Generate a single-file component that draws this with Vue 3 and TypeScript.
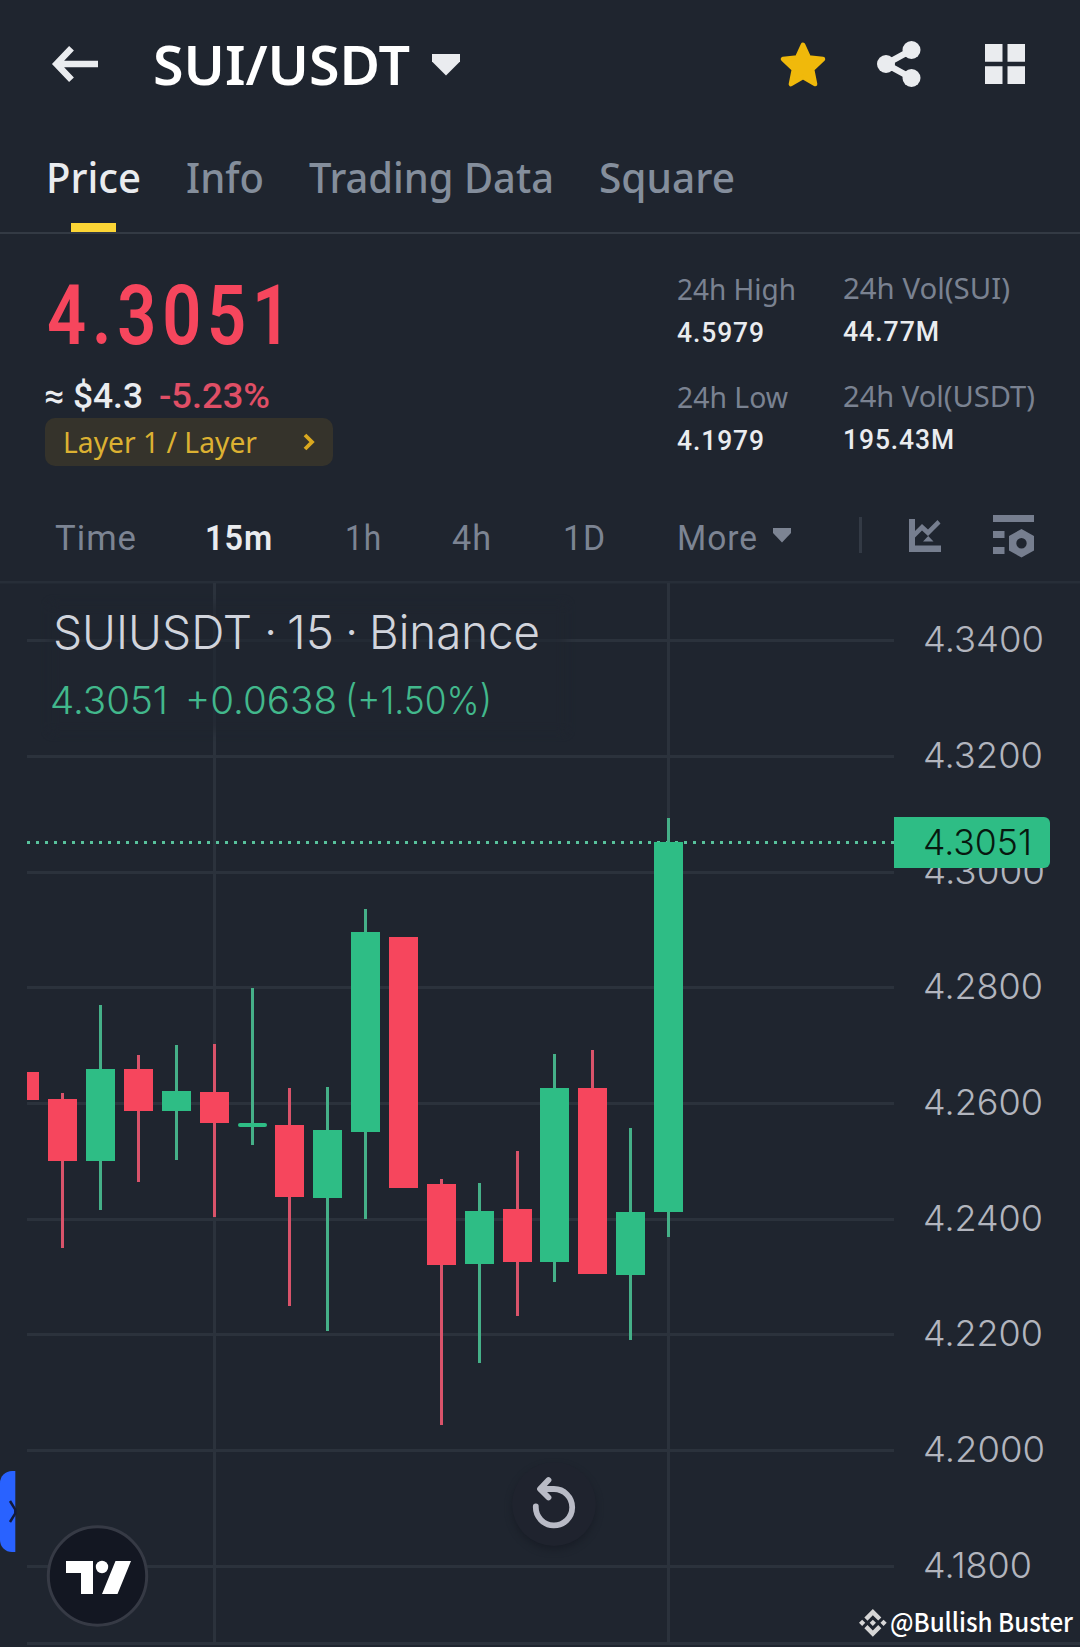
<script setup lang="ts">
interface Candle { x: number; w?: number; top: number; bottom: number; high: number; low: number; up: boolean }

const tabs = [
  { label: 'Price', w: 93, active: true },
  { label: 'Info', w: 76 },
  { label: 'Trading Data', w: 243 },
  { label: 'Square', w: 134 },
]
const stats = [
  { label: '24h High', value: '4.5979', lw: 119, vw: 88, dy: 1 },
  { label: '24h Vol(SUI)', value: '44.77M', lw: 167, vw: 97, dy: 0 },
  { label: '24h Low', value: '4.1979', lw: 111, vw: 88, dy: 1 },
  { label: '24h Vol(USDT)', value: '195.43M', lw: 192, vw: 112, dy: 0 },
]
const intervals = [
  { label: 'Time', w: 80, gap: 70 },
  { label: '15m', w: 66, gap: 74, active: true },
  { label: '1h', w: 35, gap: 72 },
  { label: '4h', w: 38, gap: 73 },
  { label: '1D', w: 41, gap: 73 },
  { label: 'More', w: 79, gap: 16 },
]
const levels = [
  { y: 640.5, label: '4.3400', w: 119 },
  { y: 756.5, label: '4.3200', w: 118 },
  { y: 872.5, label: '4.3000', w: 120 },
  { y: 987.5, label: '4.2800', w: 118 },
  { y: 1103.5, label: '4.2600', w: 118 },
  { y: 1219.5, label: '4.2400', w: 118 },
  { y: 1334.5, label: '4.2200', w: 118 },
  { y: 1450.5, label: '4.2000', w: 120 },
  { y: 1566.5, label: '4.1800', w: 107 },
]
const candles: Candle[] = [
  { x: 27, w: 12, top: 1072, bottom: 1100, high: 1072, low: 1100, up: false },
  { x: 48, top: 1099, bottom: 1161, high: 1093, low: 1248, up: false },
  { x: 86, top: 1069, bottom: 1161, high: 1005, low: 1210, up: true },
  { x: 124, top: 1069, bottom: 1111, high: 1055, low: 1182, up: false },
  { x: 162, top: 1091, bottom: 1111, high: 1045, low: 1160, up: true },
  { x: 200, top: 1092, bottom: 1123, high: 1044, low: 1217, up: false },
  { x: 238, top: 1123, bottom: 1127, high: 988, low: 1145, up: true },
  { x: 275, top: 1125, bottom: 1197, high: 1088, low: 1306, up: false },
  { x: 313, top: 1130, bottom: 1198, high: 1087, low: 1331, up: true },
  { x: 351, top: 932, bottom: 1132, high: 909, low: 1219, up: true },
  { x: 389, top: 937, bottom: 1188, high: 937, low: 1188, up: false },
  { x: 427, top: 1184, bottom: 1265, high: 1179, low: 1425, up: false },
  { x: 465, top: 1211, bottom: 1264, high: 1183, low: 1363, up: true },
  { x: 503, top: 1209, bottom: 1262, high: 1151, low: 1316, up: false },
  { x: 540, top: 1088, bottom: 1262, high: 1054, low: 1282, up: true },
  { x: 578, top: 1088, bottom: 1274, high: 1050, low: 1274, up: false },
  { x: 616, top: 1212, bottom: 1275, high: 1128, low: 1340, up: true },
  { x: 654, top: 842, bottom: 1212, high: 818, low: 1237, up: true },
]
</script>

<template>
  <main class="screen">
    <header class="header">
      <svg class="back" width="46" height="38" viewBox="0 0 46 38">
        <path d="M19.5 3.2 4.5 19l15 15.8M5 19h41" fill="none" stroke="#eaecef" stroke-width="6.6" />
      </svg>
      <svg class="pair" width="256" height="60">
        <text x="-2" y="44.5" textLength="257" lengthAdjust="spacingAndGlyphs">SUI/USDT</text>
      </svg>
      <svg class="caret" width="28" height="22" viewBox="0 0 28 22"><path d="M0 0h28v7.5L14 21.5 0 7.5z" fill="#eaecef" /></svg>
      <svg class="star" width="46" height="48" viewBox="0 0 46 48">
        <path d="M23 4l5.8 12.7 14.2 1.5-10.9 10.3 3 14.8L23 36.300l-12.100 7 3-14.800L3 18.200l14.200-1.500z" transform="translate(0 .8)" fill="#f0b90b" stroke="#f0b90b" stroke-width="4.5" stroke-linejoin="round" />
      </svg>
      <svg class="share" width="44" height="46" viewBox="0 0 44 46">
        <path d="M34.5 9 9 23l25.500 14" fill="none" stroke="#eaecef" stroke-width="6.5" />
        <circle cx="9" cy="23" r="9" fill="#eaecef" /><circle cx="34.500" cy="9" r="9" fill="#eaecef" /><circle cx="34.500" cy="37" r="9" fill="#eaecef" />
      </svg>
      <svg class="grid" width="40" height="40" viewBox="0 0 40 40">
        <path d="M0 0h17.500v17.700H0zM22.500 0H40v17.700H22.500zM0 22.300h17.500V40H0zM22.500 22.300H40V40H22.500z" fill="#eaecef" />
      </svg>
    </header>

    <nav class="tabs">
      <div v-for="t in tabs" :key="t.label" class="tab" :class="{ active: t.active }">
        <svg :width="t.w" height="56"><text x="-1" y="41.500" :textLength="t.w + 2" lengthAdjust="spacingAndGlyphs">{{ t.label }}</text></svg>
      </div>
    </nav>

    <section class="summary">
      <div class="quote">
        <svg class="last" width="250" height="80"><text x="2" y="64" textLength="250" lengthAdjust="spacingAndGlyphs">4.3051</text></svg>
        <svg class="change" width="250" height="44">
          <text x="-1" y="33.500" textLength="99" lengthAdjust="spacingAndGlyphs" fill="#eaecef">≈ $4.3</text>
          <text class="pct" x="114" y="33.500" textLength="111" lengthAdjust="spacingAndGlyphs" fill="#e04f66">-5.23%</text>
        </svg>
        <div class="badge">
          <svg width="194" height="40"><text x="-2" y="30.700" textLength="194" lengthAdjust="spacingAndGlyphs">Layer 1 / Layer</text></svg>
          <svg width="12" height="18" viewBox="0 0 12 18"><path d="m2 2 7 7-7 7" fill="none" stroke="#d9a81f" stroke-width="3.800" /></svg>
        </div>
      </div>
      <div class="stats">
        <svg v-for="s in stats" :key="s.label" class="stat" width="192" height="108">
          <text class="k" x="-1" :y="35 + s.dy" :textLength="s.lw" lengthAdjust="spacingAndGlyphs">{{ s.label }}</text>
          <text class="v" x="-1" :y="76.500 + s.dy" :textLength="s.vw" lengthAdjust="spacingAndGlyphs">{{ s.value }}</text>
        </svg>
      </div>
    </section>

    <nav class="intervals">
      <svg v-for="i in intervals" :key="i.label" class="interval" :class="{ active: i.active }" :width="i.w" height="50" :style="{ marginRight: i.gap + 'px' }">
        <text x="-1" y="40" :textLength="i.w + 2" lengthAdjust="spacingAndGlyphs">{{ i.label }}</text>
      </svg>
      <svg class="more" width="18" height="15" viewBox="0 0 18 15"><path d="M0 0h18v5L9 14.500 0 5z" fill="#7c8493" /></svg>
      <i class="divider"></i>
      <svg class="ico-chart" width="32" height="33" viewBox="0 0 32 33">
        <path d="M0 0h6v26.500h26V33H0zM6 12l7-7 6 5.500L28.500 1l3 3.500L19 17l-6-5.500-7 7zM14 22.500h10.500L19.200 17z" fill="#767e8f" />
      </svg>
      <svg class="ico-set" width="41" height="43" viewBox="0 0 41 43">
        <path d="M0 0h41v7H0zM0 16h11.500v7H0zM0 32h11.500v7H0z" fill="#767e8f" />
        <path fill-rule="evenodd" d="M28.500 14 41 21v14.500L28.500 42.500 16 35.500V21zM28.500 23a5.200 5.200 0 1 0 0 10.400 5.200 5.200 0 0 0 0-10.400z" fill="#767e8f" />
      </svg>
    </nav>

    <svg class="chart" width="1080" height="1066" viewBox="0 581 1080 1066">
      <defs>
        <filter id="soft" x="-20%" y="-20%" width="140%" height="140%" color-interpolation-filters="sRGB"><feGaussianBlur stdDeviation="4" /></filter>
        <filter id="edge" x="-5%" y="-15%" width="110%" height="130%" color-interpolation-filters="sRGB"><feGaussianBlur stdDeviation="5" /></filter>
      </defs>
      <g fill="#2b323c">
        <rect x="0" y="581" width="1080" height="2.500" fill="#272e38" />
        <rect v-for="l in levels" :key="l.label" x="27" :y="l.y - 1.5" width="867" height="3" />
        <rect x="27" y="1642" width="1053" height="3" />
        <rect x="213" y="583" width="3" height="1060" />
        <rect x="667" y="583" width="3" height="1060" />
      </g>
      <rect x="50" y="604" width="516" height="128" fill="#1f252f" opacity=".6" filter="url(#edge)" />

      <path d="M27 842.5H894" stroke="#58c29c" stroke-width="3" stroke-dasharray="3 6" />
      <g v-for="c in candles" :key="c.x">
        <rect v-if="c.high !== c.top || c.low !== c.bottom" :x="c.x + 13" :y="c.high" width="3" :height="c.low - c.high" :fill="c.up ? '#45b088' : '#d9536a'" />
        <rect :x="c.x" :y="c.top" :width="c.w ?? 29" :height="c.bottom - c.top" :rx="c.bottom - c.top < 6 ? 2 : 0" :fill="c.up ? '#2ebd85' : '#f6465d'" />
      </g>

      <g class="axis">
        <text v-for="l in levels" :key="l.label" x="923" :y="l.y + 11.2" :textLength="l.w + 2" lengthAdjust="spacingAndGlyphs">{{ l.label }}</text>
      </g>
      <path d="M894 817h150a6 6 0 0 1 6 6v39a6 6 0 0 1-6 6H894z" fill="#2ebd85" />
      <text class="tag" x="923" y="854.5" textLength="109" lengthAdjust="spacingAndGlyphs">4.3051</text>

      <g class="legend">
        <text x="53" y="649" textLength="199" lengthAdjust="spacingAndGlyphs">SUIUSDT</text>
        <text x="264" y="649">·</text>
        <text x="287" y="649" textLength="47" lengthAdjust="spacingAndGlyphs">15</text>
        <text x="345" y="649">·</text>
        <text x="369" y="649" textLength="171" lengthAdjust="spacingAndGlyphs">Binance</text>
      </g>
      <g class="delta">
        <text x="50" y="713.7" textLength="118" lengthAdjust="spacingAndGlyphs">4.3051</text>
        <text x="185" y="713.7" textLength="152" lengthAdjust="spacingAndGlyphs">+0.0638</text>
        <text x="345" y="713.7" textLength="147" lengthAdjust="spacingAndGlyphs">(+1.50%)</text>
      </g>

      <path d="M15.300 1471H12a12 12 0 0 0-12 12v57a12 12 0 0 0 12 12h3.300z" fill="#2962ff" />
      <path d="m10 1501 5.300 8.500v4L10 1522" fill="none" stroke="#131a3a" stroke-width="2.500" />

      <circle cx="97.500" cy="1576" r="49.200" fill="#131722" stroke="#363a45" stroke-width="3" />
      <path d="M66 1561h27v33H81v-21H66zM115.500 1561h15.500L117.500 1594H102z" fill="#fff" />
      <circle cx="102" cy="1567" r="6.200" fill="#fff" />

      <circle cx="554" cy="1508" r="41" fill="#141821" opacity=".7" filter="url(#soft)" />
      <circle cx="554" cy="1504" r="42" fill="#1f232e" />
      <path d="M535.800 1506.500A18.200 18.200 0 1 0 554 1489h-13" fill="none" stroke="#b9bbc6" stroke-width="5.800" stroke-linecap="round" />
      <path d="m548.500 1480-8.500 9 8.500 8.500" fill="none" stroke="#b9bbc6" stroke-width="5.800" stroke-linecap="round" stroke-linejoin="round" />

      <path transform="translate(859 1609) scale(1.155)" fill="#d6d6d6" d="M16.624 13.920l2.717 2.715-7.353 7.353-7.353-7.352 2.717-2.716 4.636 4.659 4.636-4.659zm4.637-4.636L24 12l-2.715 2.716L18.568 12l2.693-2.716zm-9.272 0l2.716 2.692-2.716 2.717L9.272 12l2.717-2.716zm-9.273 0L5.409 12l-2.692 2.692L0 12l2.716-2.716zM11.989.011l7.353 7.329-2.718 2.716-4.635-4.636-4.636 4.660-2.717-2.716L11.989.011z" />
      <text class="mark" x="890" y="1632" textLength="183" lengthAdjust="spacingAndGlyphs">@Bullish Buster</text>
    </svg>
  </main>
</template>

<style>
body { background: #1f252f; }
</style>
<style scoped>
.screen { width: 1080px; height: 1647px; background: #1f252f; overflow: hidden; font-family: Roboto, "Noto Sans", sans-serif; display: flex; flex-direction: column; }
svg { display: block; flex: none; overflow: visible; }
.header { height: 128px; display: flex; align-items: center; padding: 0 55px 0 52px; box-sizing: border-box; }
.pair { margin-left: 57px; margin-top: 12px; font-family: "Noto Sans", sans-serif; font-size: 54px; font-weight: 600; fill: #fff; }
.caret { margin: 2px 0 0 21px; }
.star { margin-left: auto; }
.share { margin-left: 51px; }
.grid { margin-left: 64px; }
.tabs { height: 106px; box-sizing: border-box; padding: 23px 0 0 47px; display: flex; gap: 47px; border-bottom: 2px solid #333a44; font-family: "Noto Sans", sans-serif; font-size: 41px; font-weight: 500; }
.tab { fill: #848e9c; display: flex; flex-direction: column; justify-content: space-between; align-items: center; }
.tab.active { fill: #eaecef; }
.tab.active::after { content: ""; width: 45px; height: 9px; background: #fcd535; }
.summary { height: 254px; display: flex; padding: 46px 0 0 45px; box-sizing: border-box; }
.quote { width: 632px; display: flex; flex-direction: column; }
.last { font-size: 83px; font-weight: 600; letter-spacing: 7px; fill: #f6465d; }
.change { margin-top: 14px; font-size: 34.5px; font-weight: 500; }
.badge { width: 288px; height: 48px; box-sizing: border-box; padding: 0 18px 0 20px; border-radius: 10px; background: #35332b; display: flex; align-items: center; justify-content: space-between; font-family: "Noto Sans", sans-serif; font-size: 29.5px; fill: #dcb132; }
.stats { display: grid; grid-template-columns: 166px 190px; grid-template-rows: 108px 108px; margin-top: -16px; padding-left: 1px; }
.k { font-family: "Noto Sans", sans-serif; font-size: 29.500px; fill: #7a8291; }
.v { font-size: 28.500px; fill: #eaecef; font-weight: 500; letter-spacing: 1px; }
.intervals { height: 93px; display: flex; align-items: center; padding-left: 56px; font-size: 34.500px; fill: #7c8493; }
.interval { letter-spacing: 1px; }
.interval.active { fill: #eaecef; font-weight: 600; }
.more { margin-top: 2px; }
.divider { width: 3px; height: 36px; background: #333a45; margin-left: 68px; }
.ico-chart { margin-left: 47px; margin-top: 1px; }
.ico-set { margin-left: 52px; margin-top: 4px; }
.chart { font-family: Inter, "Liberation Sans", sans-serif; font-weight: 300; }
.axis { font-size: 36px; fill: #b2b5be; }
.tag { font-size: 36px; fill: #07180f; }
.legend { font-size: 47px; fill: #d1d4dc; }
.delta { font-size: 38.500px; fill: #42b88c; }
.mark { font-family: "Noto Sans CJK SC", sans-serif; font-size: 26px; font-weight: 500; fill: #fff; }
</style>
